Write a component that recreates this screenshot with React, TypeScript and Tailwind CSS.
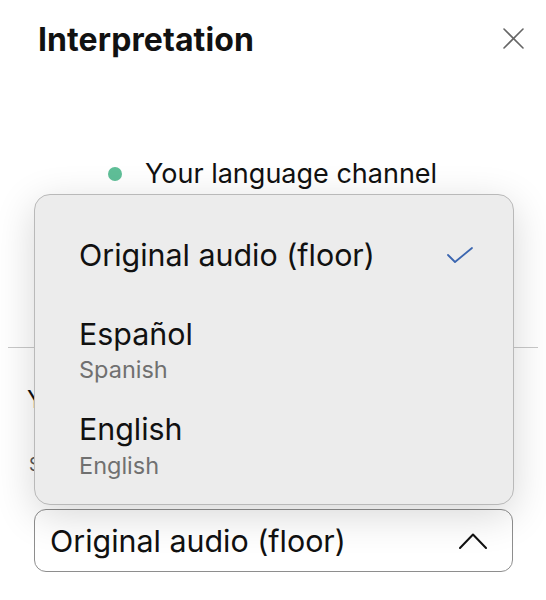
import React from "react";

export default function App() {
  return (
    <div
      className="relative w-[546px] h-[600px] bg-white overflow-hidden text-[#111]"
      style={{ fontFamily: "Inter, 'Noto Sans', sans-serif" }}
    >
      {/* Header */}
      <div className="flex items-start justify-between pl-[38px] pr-[22px] pt-[21px]">
        <h1 className="text-[32px] leading-[38px] font-bold tracking-[0.1px]">Interpretation</h1>
        <button className="mt-[7px] w-[21px] h-[21px] flex items-center justify-center">
          <svg width="21" height="21" viewBox="0 0 21 21" fill="none" stroke="#666" strokeWidth="1.6" strokeLinecap="round">
            <line x1="1" y1="1" x2="20" y2="20" />
            <line x1="20" y1="1" x2="1" y2="20" />
          </svg>
        </button>
      </div>

      {/* Channel indicator */}
      <div className="flex items-center gap-[23px] pl-[108px] mt-[99px]">
        <span className="w-[14px] h-[14px] rounded-full bg-[#5fbf98]" />
        <span className="text-[27px] leading-[32px]">Your language channel</span>
      </div>

      {/* Divider */}
      <div className="mx-[8px] mt-[157px] border-t border-[#c9c9c9]" />

      {/* Labels behind the menu */}
      <div className="pl-[27px] mt-[37px] text-[24px] leading-[30px]">Your language</div>
      <div className="pl-[29px] mt-[38px] text-[18px] leading-[24px] text-[#555]">Select a channel</div>

      {/* Select box */}
      <div className="mx-[34px] mt-[32px] h-[63px] w-[479px] rounded-[12px] border border-[#8e8e8e] bg-white flex items-center justify-between pl-[15px] pr-[25px]">
        <span className="text-[30.4px] leading-[36px]">Original audio (floor)</span>
        <svg width="28" height="16" viewBox="0 0 28 16" fill="none" stroke="#111" strokeWidth="2" strokeLinecap="round" strokeLinejoin="round">
          <polyline points="1,15 14,1.5 27,15" />
        </svg>
      </div>

      {/* Dropdown menu */}
      <div className="absolute left-[34px] top-[194px] w-[480px] h-[311px] rounded-[16px] border border-[#b9b9b9] bg-[#ececec] shadow-[0_10px_40px_rgba(0,0,0,0.16)] pl-[44px] pr-[40px] pt-[42px] flex flex-col">
        <div className="flex items-center justify-between">
          <span className="text-[30.4px] leading-[36px]">Original audio (floor)</span>
          <svg width="26" height="16" viewBox="0 0 26 16" fill="none" stroke="#3b66b0" strokeWidth="1.8" strokeLinecap="round" strokeLinejoin="round">
            <polyline points="1,8 8,15 25,1" />
          </svg>
        </div>
        <div className="mt-[43px] text-[30.4px] leading-[36px]">Español</div>
        <div className="mt-[4px] text-[23.5px] leading-[28px] text-[#707070]">Spanish</div>
        <div className="mt-[27px] text-[30.4px] leading-[36px]">English</div>
        <div className="mt-[5px] text-[23.5px] leading-[28px] text-[#707070]">English</div>
      </div>
    </div>
  );
}
